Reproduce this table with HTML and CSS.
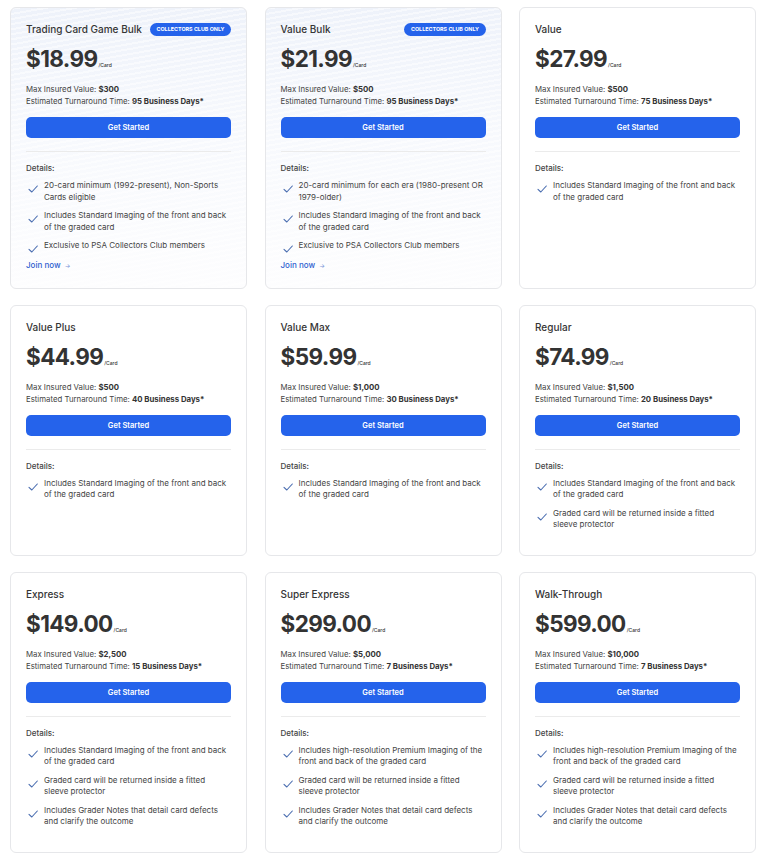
FILE: index.html
```html
<!DOCTYPE html>
<html lang="en">
<head>
    <meta charset="UTF-8">
    <meta name="viewport" content="width=device-width, initial-scale=1.0">
    <title>Grading Service Levels</title>
    <link rel="stylesheet" href="styles.css">
</head>
<body>

    <div class="plans">

        <div class="plan plan-club">
            <div class="plan-head">
                <div class="plan-name">Trading Card Game Bulk</div>
                <span class="badge">Collectors Club Only</span>
            </div>
            <div class="price">$18.99<span class="unit">/Card</span></div>
            <div class="info">
                <div>Max Insured Value: <b>$300</b></div>
                <div>Estimated Turnaround Time: <b>95 Business Days*</b></div>
            </div>
            <button class="start">Get Started</button>
            <div class="details-label">Details:</div>
            <ul class="details">
                <li>20-card minimum (1992-present), Non-Sports Cards eligible</li>
                <li>Includes Standard Imaging of the front and back of the graded card</li>
                <li>Exclusive to PSA Collectors Club members</li>
            </ul>
            <a class="join" href="#">Join now <span class="arrow">&rarr;</span></a>
        </div>

        <div class="plan plan-club">
            <div class="plan-head">
                <div class="plan-name">Value Bulk</div>
                <span class="badge">Collectors Club Only</span>
            </div>
            <div class="price">$21.99<span class="unit">/Card</span></div>
            <div class="info">
                <div>Max Insured Value: <b>$500</b></div>
                <div>Estimated Turnaround Time: <b>95 Business Days*</b></div>
            </div>
            <button class="start">Get Started</button>
            <div class="details-label">Details:</div>
            <ul class="details">
                <li>20-card minimum for each era (1980-present OR 1979-older)</li>
                <li>Includes Standard Imaging of the front and back of the graded card</li>
                <li>Exclusive to PSA Collectors Club members</li>
            </ul>
            <a class="join" href="#">Join now <span class="arrow">&rarr;</span></a>
        </div>

        <div class="plan">
            <div class="plan-head">
                <div class="plan-name">Value</div>
            </div>
            <div class="price">$27.99<span class="unit">/Card</span></div>
            <div class="info">
                <div>Max Insured Value: <b>$500</b></div>
                <div>Estimated Turnaround Time: <b>75 Business Days*</b></div>
            </div>
            <button class="start">Get Started</button>
            <div class="details-label">Details:</div>
            <ul class="details">
                <li>Includes Standard Imaging of the front and back of the graded card</li>
            </ul>
        </div>

        <div class="plan">
            <div class="plan-head">
                <div class="plan-name">Value Plus</div>
            </div>
            <div class="price">$44.99<span class="unit">/Card</span></div>
            <div class="info">
                <div>Max Insured Value: <b>$500</b></div>
                <div>Estimated Turnaround Time: <b>40 Business Days*</b></div>
            </div>
            <button class="start">Get Started</button>
            <div class="details-label">Details:</div>
            <ul class="details">
                <li>Includes Standard Imaging of the front and back of the graded card</li>
            </ul>
        </div>

        <div class="plan">
            <div class="plan-head">
                <div class="plan-name">Value Max</div>
            </div>
            <div class="price">$59.99<span class="unit">/Card</span></div>
            <div class="info">
                <div>Max Insured Value: <b>$1,000</b></div>
                <div>Estimated Turnaround Time: <b>30 Business Days*</b></div>
            </div>
            <button class="start">Get Started</button>
            <div class="details-label">Details:</div>
            <ul class="details">
                <li>Includes Standard Imaging of the front and back of the graded card</li>
            </ul>
        </div>

        <div class="plan">
            <div class="plan-head">
                <div class="plan-name">Regular</div>
            </div>
            <div class="price">$74.99<span class="unit">/Card</span></div>
            <div class="info">
                <div>Max Insured Value: <b>$1,500</b></div>
                <div>Estimated Turnaround Time: <b>20 Business Days*</b></div>
            </div>
            <button class="start">Get Started</button>
            <div class="details-label">Details:</div>
            <ul class="details">
                <li>Includes Standard Imaging of the front and back of the graded card</li>
                <li>Graded card will be returned inside a fitted sleeve protector</li>
            </ul>
        </div>

        <div class="plan">
            <div class="plan-head">
                <div class="plan-name">Express</div>
            </div>
            <div class="price">$149.00<span class="unit">/Card</span></div>
            <div class="info">
                <div>Max Insured Value: <b>$2,500</b></div>
                <div>Estimated Turnaround Time: <b>15 Business Days*</b></div>
            </div>
            <button class="start">Get Started</button>
            <div class="details-label">Details:</div>
            <ul class="details">
                <li>Includes Standard Imaging of the front and back of the graded card</li>
                <li>Graded card will be returned inside a fitted sleeve protector</li>
                <li>Includes Grader Notes that detail card defects and clarify the outcome</li>
            </ul>
        </div>

        <div class="plan">
            <div class="plan-head">
                <div class="plan-name">Super Express</div>
            </div>
            <div class="price">$299.00<span class="unit">/Card</span></div>
            <div class="info">
                <div>Max Insured Value: <b>$5,000</b></div>
                <div>Estimated Turnaround Time: <b>7 Business Days*</b></div>
            </div>
            <button class="start">Get Started</button>
            <div class="details-label">Details:</div>
            <ul class="details">
                <li>Includes high-resolution Premium Imaging of the front and back of the graded card</li>
                <li>Graded card will be returned inside a fitted sleeve protector</li>
                <li>Includes Grader Notes that detail card defects and clarify the outcome</li>
            </ul>
        </div>

        <div class="plan">
            <div class="plan-head">
                <div class="plan-name">Walk-Through</div>
            </div>
            <div class="price">$599.00<span class="unit">/Card</span></div>
            <div class="info">
                <div>Max Insured Value: <b>$10,000</b></div>
                <div>Estimated Turnaround Time: <b>7 Business Days*</b></div>
            </div>
            <button class="start">Get Started</button>
            <div class="details-label">Details:</div>
            <ul class="details">
                <li>Includes high-resolution Premium Imaging of the front and back of the graded card</li>
                <li>Graded card will be returned inside a fitted sleeve protector</li>
                <li>Includes Grader Notes that detail card defects and clarify the outcome</li>
            </ul>
        </div>

    </div>

</body>
</html>
```

FILE: styles.css
```css
body {
    margin: 0;
    background-color: #fff;
    font-family: Inter, "Noto Sans", sans-serif;
    color: #3a3a3a;
}

.plans {
    display: grid;
    grid-template-columns: repeat(3, 237px);
    column-gap: 17.5px;
    row-gap: 16px;
    padding: 7px 10px;
}

.plan {
    border: 1px solid #e6e7ea;
    border-radius: 6px;
    padding: 14px 15px 16px;
    background-color: #fff;
    display: flex;
    flex-direction: column;
}

.plan-club {
    background:
        repeating-linear-gradient(170deg, rgba(255, 255, 255, 0.5) 0 2px, rgba(255, 255, 255, 0) 2px 5px),
        linear-gradient(180deg, #eef2fa 0%, #f7f9fd 45%, #fdfdfe 100%);
}

.plan-head {
    display: flex;
    justify-content: space-between;
    align-items: center;
    height: 14px;
    white-space: nowrap;
}

.plan-name {
    font-size: 10px;
    font-weight: 500;
    color: #353535;
}

.badge {
    background-color: #2563eb;
    color: #fff;
    font-size: 5.4px;
    line-height: 6px;
    font-weight: 700;
    text-transform: uppercase;
    padding: 3.5px 6.5px;
    border-radius: 8px;
}

.price {
    margin-top: 10px;
    font-size: 22.5px;
    line-height: 26px;
    font-weight: 700;
    letter-spacing: -0.6px;
    color: #333;
}

.unit {
    font-size: 5px;
    line-height: 1;
    font-weight: 500;
    letter-spacing: 0;
    margin-left: 1px;
}

.info {
    margin-top: 11px;
    font-size: 7.8px;
    line-height: 12px;
    color: #444;
}

.info b {
    font-weight: 700;
    color: #333;
}

.start {
    margin-top: 10px;
    height: 21px;
    border: none;
    border-radius: 5px;
    background-color: #2563eb;
    color: #fff;
    font-family: inherit;
    font-size: 7.5px;
    font-weight: 600;
    padding: 0;
}

.details-label {
    margin-top: 13px;
    border-top: 1px solid #ebebeb;
    padding-top: 10px;
    font-size: 8px;
    line-height: 12px;
    font-weight: 500;
    color: #444;
}

.details {
    list-style: none;
    margin: 6px 0 8px;
    padding: 0;
}

.details li {
    position: relative;
    padding-left: 18px;
    padding-right: 0.5px;
    font-size: 8px;
    line-height: 11.5px;
    color: #444;
    margin-bottom: 7px;
}

.details li:last-child {
    margin-bottom: 0;
}

.details li::before {
    content: "";
    position: absolute;
    left: 2px;
    top: 5px;
    width: 10px;
    height: 8px;
    background-image: url("data:image/svg+xml,%3Csvg xmlns='http://www.w3.org/2000/svg' viewBox='0 0 10 8'%3E%3Cpath d='M1 4.3 L3.8 7 L9.3 1' fill='none' stroke='%234a6db0' stroke-width='1.1' stroke-linecap='round' stroke-linejoin='round'/%3E%3C/svg%3E");
    background-repeat: no-repeat;
}

.join {
    margin-top: -1px;
    font-size: 8px;
    line-height: 12px;
    color: #2f5fd0;
    text-decoration: none;
    font-weight: 500;
}

.arrow {
    font-size: 6px;
    margin-left: 2px;
    color: #7a95d8;
}
```
